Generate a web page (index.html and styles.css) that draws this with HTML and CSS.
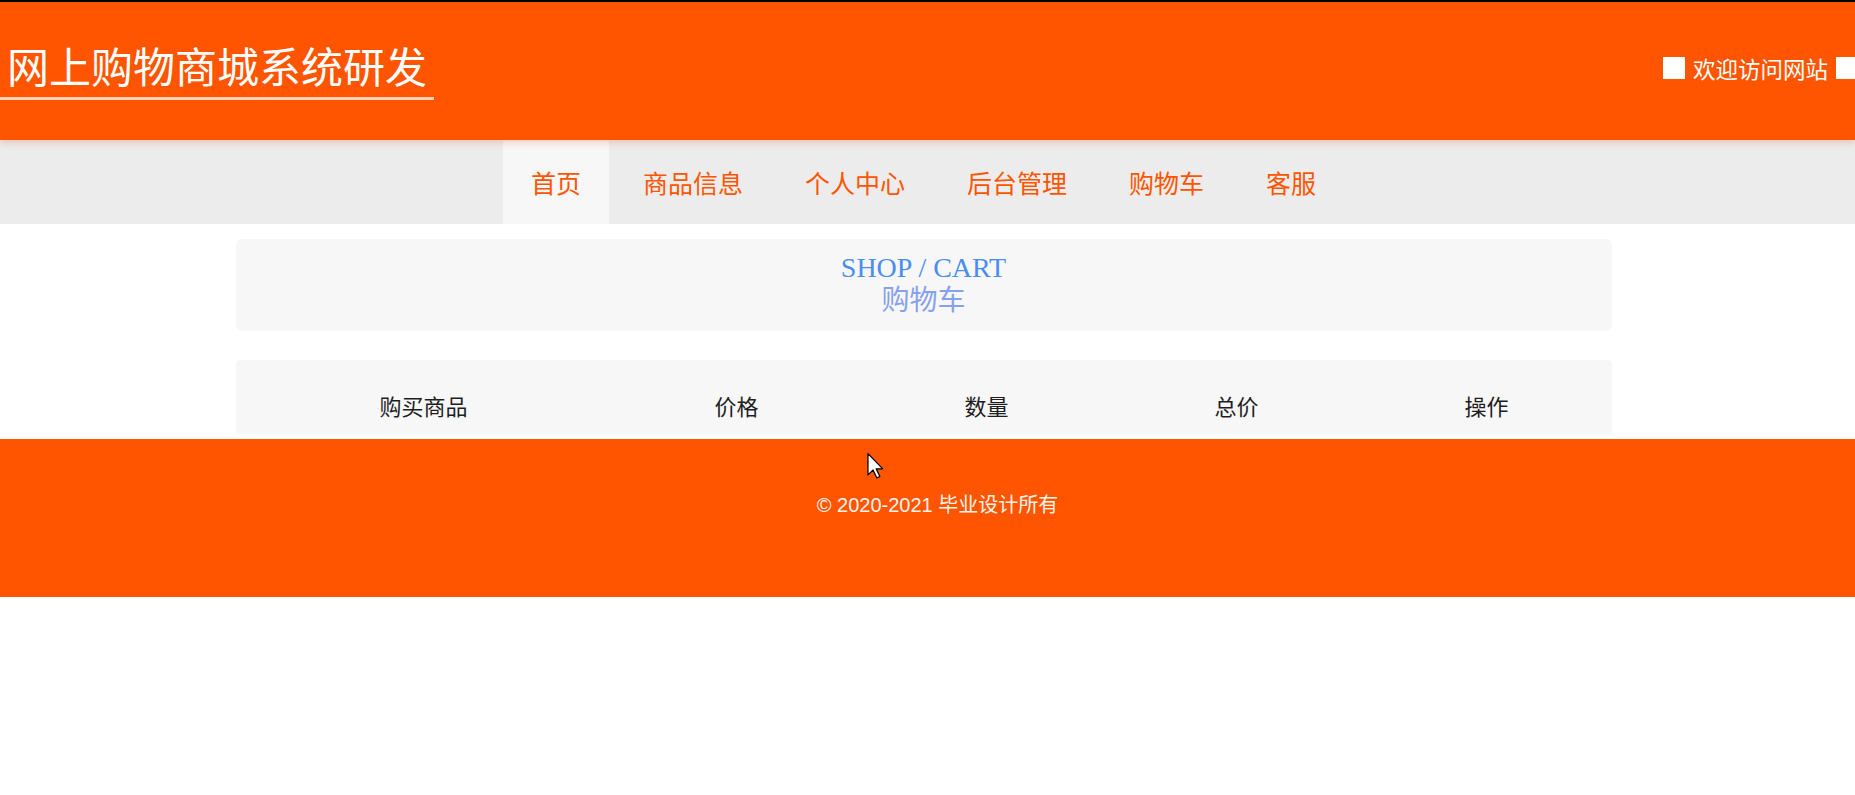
FILE: index.html
```html
<!DOCTYPE html>
<html lang="zh-CN">
<head>
<meta charset="utf-8">
<title>网上购物商城系统研发</title>
<link rel="stylesheet" href="styles.css">
</head>
<body>
<header class="header">
  <div class="brand">网上购物商城系统研发</div>
  <div class="welcome"><span class="sq"></span><span class="welcome-text">欢迎访问网站</span><span class="sq"></span></div>
</header>
<nav class="nav">
  <a class="nav-item active">首页</a>
  <a class="nav-item">商品信息</a>
  <a class="nav-item">个人中心</a>
  <a class="nav-item">后台管理</a>
  <a class="nav-item">购物车</a>
  <a class="nav-item">客服</a>
</nav>
<div class="content">
  <main class="main">
    <section class="page-title">
      <div class="title-en">SHOP / CART</div>
      <div class="title-cn">购物车</div>
    </section>
    <section class="cart">
      <table class="cart-table">
        <colgroup>
          <col class="col-first"><col class="col"><col class="col"><col class="col"><col class="col">
        </colgroup>
        <thead>
          <tr><th>购买商品</th><th>价格</th><th>数量</th><th>总价</th><th>操作</th></tr>
        </thead>
      </table>
    </section>
  </main>
</div>
<footer class="footer">
  <p class="copy">© 2020-2021 毕业设计所有</p>
</footer>
<svg class="cursor" width="17" height="26" viewBox="0 0 12 19" aria-hidden="true">
  <path d="M0.5 0.5 L0.5 16 L4.2 12.4 L7 18.2 L9.2 17.2 L6.5 11.6 L11.3 11.6 Z" fill="#fff" stroke="#000" stroke-width="0.9" stroke-linejoin="round"/>
</svg>
</body>
</html>
```

FILE: styles.css
```css
* { box-sizing: border-box; }

html, body {
  margin: 0;
  padding: 0;
  background: #fff;
  overflow: hidden;
}

body {
  font-family: "Noto Sans CJK SC", "Noto Sans", sans-serif;
  width: 1855px;
  height: 795px;
  position: relative;
}

.header {
  position: relative;
  z-index: 2;
  height: 140px;
  border-top: 2px solid #000;
  background: #ff5500;
  display: flex;
  align-items: flex-start;
  box-shadow: 0 3px 6px rgba(210, 70, 20, 0.22);
}

.brand {
  margin-top: 42px;
  padding: 0 7px 11px 7px;
  font-size: 42px;
  line-height: 42px;
  color: #fff;
  border-bottom: 3px solid rgba(255, 232, 220, 0.85);
  white-space: nowrap;
}

.welcome {
  margin-left: auto;
  margin-right: -3px;
  margin-top: 55px;
  display: flex;
  align-items: center;
  gap: 8px;
  height: 22px;
  white-space: nowrap;
}

.sq {
  display: block;
  width: 22px;
  height: 22px;
  background: #fff;
}

.welcome-text {
  font-size: 22.5px;
  line-height: 22px;
  color: #fff;
}

.nav {
  height: 84px;
  background: #ececec;
  display: flex;
  justify-content: center;
  gap: 6px;
  padding-right: 8px;
}

.nav-item {
  display: block;
  padding: 0 28px;
  font-size: 25px;
  line-height: 84px;
  color: #ff5500;
  text-decoration: none;
  cursor: pointer;
}

.nav-item.active {
  background: #f7f7f7;
}

.content {
  padding-right: 8px;
}

.main {
  width: 1376px;
  margin: 0 auto;
  padding-top: 15px;
}

.page-title {
  height: 92px;
  background: #f7f7f7;
  border-radius: 6px;
  padding-top: 13px;
  text-align: center;
}

.title-en {
  font-family: "Liberation Serif", "Times New Roman", serif;
  font-size: 28px;
  line-height: 31px;
  color: #4a8ef2;
}

.title-cn {
  font-size: 28px;
  line-height: 30px;
  color: #86a2ee;
}

.cart {
  margin-top: 29px;
  height: 73px;
  background: #f7f7f7;
  border-radius: 4px;
  padding-top: 28px;
}

.cart-table {
  width: 100%;
  border-collapse: collapse;
  table-layout: fixed;
}

.col-first { width: 376px; }
.col { width: 250px; }

.cart-table th {
  padding: 0;
  font-weight: normal;
  font-size: 22px;
  line-height: 34px;
  color: #1e1e1e;
  text-align: center;
}

.footer {
  margin-top: 6px;
  height: 158px;
  background: #ff5500;
  padding-top: 54px;
  text-align: center;
}

.copy {
  margin: 0;
  padding-left: 20px;
  font-family: "Liberation Sans", "Noto Sans CJK SC", sans-serif;
  font-size: 20px;
  line-height: 24px;
  color: #fff4ec;
}

.cursor {
  position: absolute;
  left: 867px;
  top: 453px;
  z-index: 5;
}
```
